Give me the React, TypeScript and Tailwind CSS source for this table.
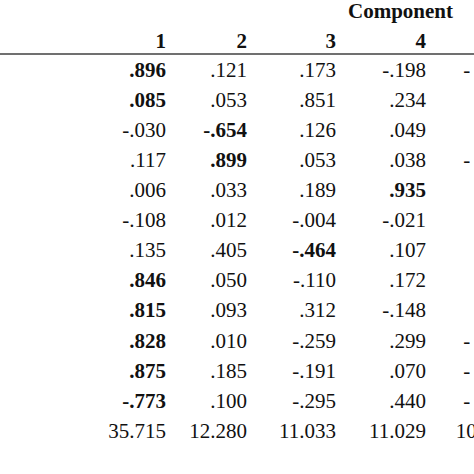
import React from "react";

type Cell = { v: string; b?: boolean };

const rows: Cell[][] = [
  [{ v: ".896", b: true }, { v: ".121" }, { v: ".173" }, { v: "-.198" }, { v: "-.086" }],
  [{ v: ".085", b: true }, { v: ".053" }, { v: ".851" }, { v: ".234" }, { v: ".101" }],
  [{ v: "-.030" }, { v: "-.654", b: true }, { v: ".126" }, { v: ".049" }, { v: ".021" }],
  [{ v: ".117" }, { v: ".899", b: true }, { v: ".053" }, { v: ".038" }, { v: "-.087" }],
  [{ v: ".006" }, { v: ".033" }, { v: ".189" }, { v: ".935", b: true }, { v: ".116" }],
  [{ v: "-.108" }, { v: ".012" }, { v: "-.004" }, { v: "-.021" }, { v: ".961", b: true }],
  [{ v: ".135" }, { v: ".405" }, { v: "-.464", b: true }, { v: ".107" }, { v: ".312" }],
  [{ v: ".846", b: true }, { v: ".050" }, { v: "-.110" }, { v: ".172" }, { v: ".044" }],
  [{ v: ".815", b: true }, { v: ".093" }, { v: ".312" }, { v: "-.148" }, { v: ".068" }],
  [{ v: ".828", b: true }, { v: ".010" }, { v: "-.259" }, { v: ".299" }, { v: "-.052" }],
  [{ v: ".875", b: true }, { v: ".185" }, { v: "-.191" }, { v: ".070" }, { v: "-.097" }],
  [{ v: "-.773", b: true }, { v: ".100" }, { v: "-.295" }, { v: ".440" }, { v: "-.121" }],
];

const total: string[] = ["35.715", "12.280", "11.033", "11.029", "10.56"];

const cols = "grid grid-cols-[166px_81px_89px_90px_81px] w-[507px]";

export default function App() {
  return (
    <div
      className="w-[474px] h-[474px] overflow-hidden bg-white text-[21px] text-[#111]"
      style={{ fontFamily: '"Liberation Serif", "Times New Roman", serif' }}
    >
      <div className="w-[470px] overflow-hidden">
        <div className="h-[23px] leading-[23px] font-bold pl-[348px] whitespace-nowrap">
          Component
        </div>
        <div className={`${cols} pt-[6.7px] leading-[23px] font-bold`}>
          <div className="text-right">1</div>
          <div className="text-right">2</div>
          <div className="text-right">3</div>
          <div className="text-right">4</div>
          <div className="text-right">5</div>
        </div>
      </div>
      <div className="h-[2px] w-[474px] bg-[#707070]" />
      <div className="w-[470px] overflow-hidden">
        {rows.map((r, i) => (
          <div key={i} className={`${cols} h-[30.1px] leading-[30.1px]`}>
            {r.map((c, j) => (
              <div
                key={j}
                className={`text-right whitespace-nowrap ${c.b ? "font-bold" : ""}`}
              >
                {c.v}
              </div>
            ))}
          </div>
        ))}
      </div>
      <div className="w-[474px] overflow-hidden">
        <div className={`${cols} h-[30.1px] leading-[30.1px]`}>
          {total.map((v, j) => (
            <div
              key={j}
              className={`text-right whitespace-nowrap ${j === 4 ? "pr-[4px]" : ""}`}
            >
              {v}
            </div>
          ))}
        </div>
      </div>
    </div>
  );
}
